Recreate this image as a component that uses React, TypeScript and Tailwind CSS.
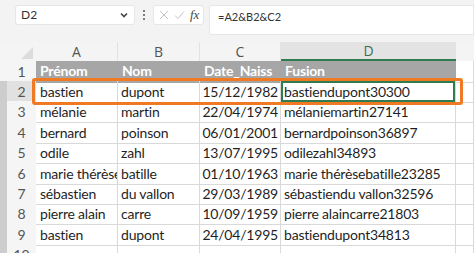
import React from 'react';

const rows: [string, string, string, string][] = [
  ['bastien', 'dupont', '15/12/1982', 'bastiendupont30300'],
  ['mélanie', 'martin', '22/04/1974', 'mélaniemartin27141'],
  ['bernard', 'poinson', '06/01/2001', 'bernardpoinson36897'],
  ['odile', 'zahl', '13/07/1995', 'odilezahl34893'],
  ['marie thérèse', 'batille', '01/10/1963', 'marie thérèsebatille23285'],
  ['sébastien', 'du vallon', '29/03/1989', 'sébastiendu vallon32596'],
  ['pierre alain', 'carre', '10/09/1959', 'pierre alaincarre21803'],
  ['bastien', 'dupont', '24/04/1995', 'bastiendupont34813'],
];

const cols = 'grid grid-cols-[36px_82px_82px_81px_175px_1fr]';
const cell = 'border-r border-b border-[#d9d9d9] overflow-hidden whitespace-nowrap flex items-center';

const RowNum: React.FC<{ n: number; active?: boolean }> = ({ n, active }) => (
  <div
    className={`flex items-center justify-center text-[14px] text-[#555] border-b border-[#d9d9d9] ${
      n > 1 ? 'border-l-[7px] border-l-[#cdcdcd]' : 'pl-[7px] bg-[#f5f5f5]'
    } ${active ? 'bg-[#e1e1e1]' : n > 1 ? 'bg-[#f5f5f5]' : ''}`}
  >
    {n}
  </div>
);

export default function App() {
  return (
    <div
      className="relative w-[474px] h-[253px] overflow-hidden bg-white text-[#1f1f1f]"
      style={{ fontFamily: 'Lato, "Open Sans", sans-serif' }}
    >
      {/* formula bar */}
      <div className="h-[42px] bg-[#f3f3f3] flex items-start pt-[5px] pl-[15px] gap-[5px]">
        <div className="w-[120px] h-[20px] bg-white rounded-[3px] border border-[#e6e6e6] flex items-center justify-between px-[5px] text-[12px] text-[#333]">
          <span>D2</span>
          <svg width="8" height="6" viewBox="0 0 8 6" className="mr-[1px]">
            <path d="M1 1.5 L4 4.5 L7 1.5" stroke="#444" strokeWidth="1.6" fill="none" />
          </svg>
        </div>
        <div className="w-[8px] h-[20px] flex flex-col items-center justify-center gap-[2px]">
          <span className="w-[2px] h-[2px] bg-[#555] rounded-full" />
          <span className="w-[2px] h-[2px] bg-[#555] rounded-full" />
          <span className="w-[2px] h-[2px] bg-[#555] rounded-full" />
        </div>
        <div className="w-[51px] h-[20px] bg-white rounded-[3px] border border-[#e6e6e6] flex items-center gap-[5px] pl-[5px]">
          <svg width="10" height="10" viewBox="0 0 10 10">
            <path d="M1 1 L9 9 M9 1 L1 9" stroke="#c4c4c4" strokeWidth="1" />
          </svg>
          <svg width="11" height="10" viewBox="0 0 11 10">
            <path d="M1 5.5 L4 8.5 L10 1.5" stroke="#c4c4c4" strokeWidth="1" fill="none" />
          </svg>
          <span className="text-[13px] italic text-[#444]" style={{ fontFamily: '"Liberation Serif", serif' }}>
            fx
          </span>
        </div>
        <div className="flex-1 h-[30px] bg-white rounded-l-[3px] border border-[#e6e6e6] px-[8px] pt-[3px] text-[11px] text-[#333]">
          =A2&amp;B2&amp;C2
        </div>
      </div>

      {/* column headers */}
      <div
        className={`${cols} h-[19px] bg-[#f4f4f4] text-[14px] leading-[15px] text-[#555]`}
        style={{ fontFamily: '"Open Sans", sans-serif' }}
      >
        <div className="flex items-end justify-end pr-[3px] pb-[2px]">
          <svg width="12" height="12" viewBox="0 0 12 12">
            <path d="M12 0 L12 12 L0 12 Z" fill="#dcdcdc" />
          </svg>
        </div>
        {['A', 'B', 'C'].map((c) => (
          <div key={c} className="flex items-center justify-center border-r border-[#e2e2e2]">
            {c}
          </div>
        ))}
        <div className="flex items-center justify-center bg-[#e3e3e3] border-b-2 border-[#2f7d4e] text-[#3c6e50]">D</div>
        <div />
      </div>

      {/* sheet */}
      <div className="text-[14px] tracking-[-0.2px]">
        <div className={`${cols} h-[20px]`}>
          <RowNum n={1} />
          {['Prénom', 'Nom', 'Date_Naiss', 'Fusion'].map((h) => (
            <div key={h} className="bg-[#a6a6a6] text-white font-bold flex items-center pl-[4px] leading-[16px] pb-[3px]">
              {h}
            </div>
          ))}
          <div className={cell} />
        </div>
        {rows.map((r, i) => {
          const active = i === 0;
          return (
            <div key={i} className={`${cols} h-[20.4px]`}>
              <RowNum n={i + 2} active={active} />
              <div className={`${cell} pl-[4px]`}>{r[0]}</div>
              <div className={`${cell} pl-[3px]`}>{r[1]}</div>
              <div className={`${cell} justify-end pr-[2px]`}>{r[2]}</div>
              <div className={`${cell} pl-[3px] ${active ? 'shadow-[inset_0_0_0_2px_#2f7d4e]' : ''}`}>{r[3]}</div>
              <div className={cell} />
            </div>
          );
        })}
        <div className={`${cols} h-[20.4px]`}>
          <RowNum n={10} />
          <div className={cell} />
          <div className={cell} />
          <div className={cell} />
          <div className={cell} />
          <div className={cell} />
        </div>
      </div>

      {/* highlighted row outline */}
      <div className="absolute left-[32px] top-[78px] w-[431px] h-[27px] border-[3px] border-[#f07a24] rounded-[3px] pointer-events-none" />
    </div>
  );
}
